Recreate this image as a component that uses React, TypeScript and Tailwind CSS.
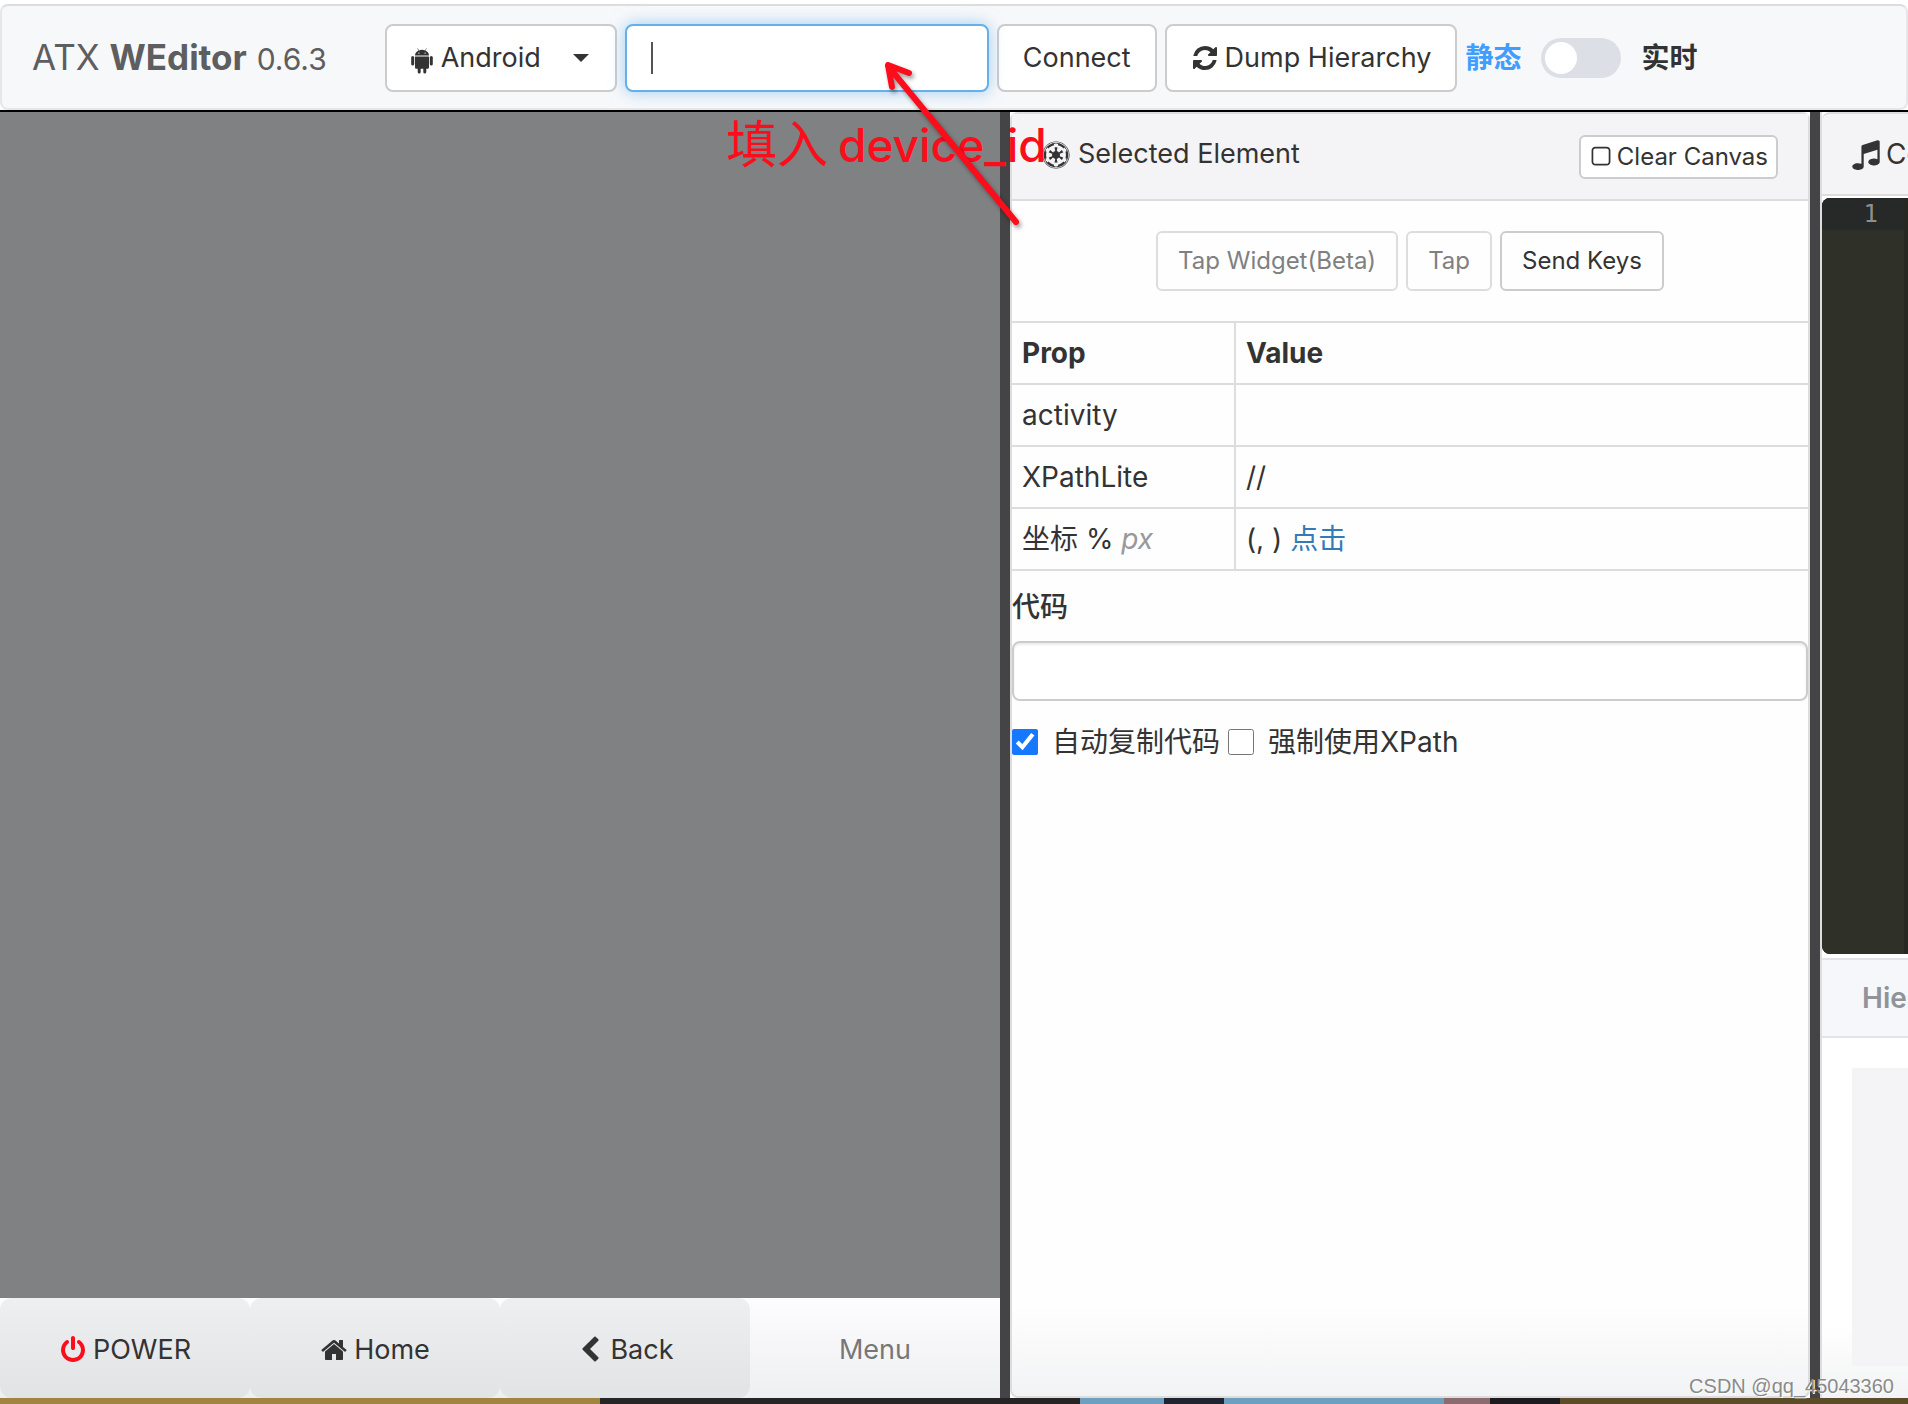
import React, { useState } from "react";
import { FaEmpire } from "react-icons/fa";

const paths = {
  refresh:
    "M1639 1056q0 5-1 7-64 268-268 434.5t-478 166.5q-146 0-282.5-55t-243.5-157l-129 129q-19 19-45 19t-45-19-19-45v-448q0-26 19-45t45-19h448q26 0 45 19t19 45-19 45l-137 137q71 66 161 102t187 36q134 0 250-65t186-179q11-17 53-117 8-23 30-23h192q13 0 22.5 9.5t9.5 22.5zm25-800v448q0 26-19 45t-45 19h-448q-26 0-45-19t-19-45 19-45l138-138q-148-137-349-137-134 0-250 65t-186 179q-11 17-53 117-8 23-30 23h-199q-13 0-22.5-9.5t-9.5-22.5v-7q65-268 270-434.5t480-166.5q146 0 284 55.5t245 156.5l130-129q19-19 45-19t45 19 19 45z",
  home: "M1472 992v480q0 26-19 45t-45 19h-384v-384h-256v384h-384q-26 0-45-19t-19-45v-480q0-1 .5-3t.5-3l575-474 575 474q1 2 1 6zm223-69l-62 74q-8 9-21 11h-3q-13 0-21-7l-692-577-692 577q-12 8-24 7-13-2-21-11l-62-74q-8-10-7-23.5t11-21.5l719-599q32-26 76-26t76 26l244 204v-195q0-14 9-23t23-9h192q14 0 23 9t9 23v408l219 182q10 8 11 21.5t-7 23.5z",
  power:
    "M1664 896q0 156-61 298t-164 245-245 164-298 61-298-61-245-164-164-245-61-298q0-182 80.5-343t226.5-270q43-32 95.5-25t83.5 50q32 42 24.5 94.5t-49.5 84.5q-98 74-151.5 181t-53.5 228q0 104 40.5 198.5t109.5 163.5 163.5 109.5 198.5 40.5 198.5-40.5 163.5-109.5 109.5-163.5 40.5-198.5q0-121-53.5-228t-151.5-181q-42-32-49.5-84.5t24.5-94.5q31-43 84-50t95 25q146 109 226.5 270t80.5 343zm-640-768v640q0 52-38 90t-90 38-90-38-38-90v-640q0-52 38-90t90-38 90 38 38 90z",
  chevron:
    "M1427 301l-531 531 531 531q19 19 19 45t-19 45l-166 166q-19 19-45 19t-45-19l-742-742q-19-19-19-45t19-45l742-742q19-19 45-19t45 19l166 166q19 19 19 45t-19 45z",
  music:
    "M1664 224v1120q0 50-34 89t-86 60.5-103.5 32-96.5 10.5-96.5-10.5-103.5-32-86-60.5-34-89 34-89 86-60.5 103.5-32 96.5-10.5q105 0 192 39v-537l-768 237v709q0 50-34 89t-86 60.5-103.5 32-96.5 10.5-96.5-10.5-103.5-32-86-60.5-34-89 34-89 86-60.5 103.5-32 96.5-10.5q105 0 192 39v-967q0-31 19-56.5t49-35.5l832-256q12-4 28-4 40 0 68 28t28 68z",
  square:
    "M1312 256h-832q-66 0-113 47t-47 113v832q0 66 47 113t113 47h832q66 0 113-47t47-113v-832q0-66-47-113t-113-47zm288 160v832q0 119-84.5 203.5t-203.5 84.5h-832q-119 0-203.5-84.5t-84.5-203.5v-832q0-119 84.5-203.5t203.5-84.5h832q119 0 203.5 84.5t84.5 203.5z",
};

function Icon({ name, className }: { name: keyof typeof paths; className: string }) {
  return (
    <svg viewBox="0 0 1792 1792" fill="currentColor" aria-hidden="true" className={`shrink-0 ${className}`}>
      <path d={paths[name]} />
    </svg>
  );
}

function AndroidIcon() {
  return (
    <svg viewBox="0 0 22 28" fill="currentColor" aria-hidden="true" className="mt-1.5 h-7 w-5.5 shrink-0">
      <path
        fillRule="evenodd"
        d="M4 8.6C4 6.4 5.4 4.6 7.500 3.600L6.400 1.600c-.2-.4.2-.6.4-.3L8 3.400c1.900-.8 4.200-.8 6.100 0l1.100-2.100c.2-.3.6-.1.4.3l-1.100 2C16.600 4.600 18 6.400 18 8.600zM7.900 5.400a.7.7 0 1 0 0 1.400.7.7 0 0 0 0-1.400zm6.200 0a.7.7 0 1 0 0 1.400.7.7 0 0 0 0-1.400z"
      />
      <path d="M4 9.400h14v10.800c0 .9-.7 1.600-1.600 1.600h-1.100v3.300a1.500 1.500 0 0 1-3 0v-3.300H9.700v3.300a1.500 1.500 0 0 1-3 0v-3.300H5.600c-.9 0-1.600-.7-1.600-1.600z" />
      <rect x="0.200" y="9.100" width="3" height="9.300" rx="1.500" />
      <rect x="18.800" y="9.100" width="3" height="9.300" rx="1.500" />
    </svg>
  );
}

function Navbar() {
  const [live, setLive] = useState(false);
  return (
    <header className="border-b-2 border-black bg-white pt-1">
      <nav className="flex items-center rounded-lg border-2 border-[#e7e7e9] border-t-[#dddddf] bg-[#f7f8fa] pt-4.5 pb-4 pl-7.5">
        <h1 className="mr-14.5 text-[35px] leading-10 whitespace-nowrap text-[#5e5e60]">
          ATX <b>WEditor</b> <small className="text-[30px]">0.6.3</small>
        </h1>
        <div className="flex items-center gap-2">
          <button className="flex h-17 items-center rounded-lg border-2 border-[#cccccd] bg-white pr-6.5 pl-6 text-[27px]">
            <AndroidIcon />
            <span className="ml-2">Android</span>
            <span className="ml-8 border-x-8 border-t-8 border-x-transparent border-t-[#333]" />
          </button>
          <div className="relative">
            <input
              aria-label="Device"
              className="block h-17 w-[364px] rounded-lg border-2 border-[#66afe9] bg-white px-6 text-[28px] shadow-[0_0_16px_rgba(102,175,233,0.6)] outline-none"
            />
            <span className="absolute top-4.5 left-6.5 h-8 w-0.5 bg-[#555]" />
          </div>
          <button className="h-17 rounded-lg border-2 border-[#cccccd] bg-white px-6 text-[27px]">Connect</button>
          <button className="flex h-17 items-center gap-1.5 rounded-lg border-2 border-[#cccccd] bg-white px-6 text-[27px] whitespace-nowrap">
            <Icon name="refresh" className="size-7" />
            Dump Hierarchy
          </button>
          <label className="flex items-center gap-5 text-[28px] font-bold whitespace-nowrap">
            <span className="text-[#409eff]">静态</span>
            <input
              type="checkbox"
              role="switch"
              checked={live}
              onChange={() => setLive(!live)}
              className="h-10 w-20 appearance-none rounded-full bg-[#dcdfe6] p-1 before:block before:size-8 before:rounded-full before:bg-white checked:bg-[#409eff] checked:before:ml-auto"
            />
            <span>实时</span>
          </label>
        </div>
      </nav>
    </header>
  );
}

function DevicePanel() {
  const key = "flex flex-1 items-center justify-center gap-1.5 rounded-xl bg-linear-to-b from-[#eeeff0] to-[#e2e3e4] pt-1";
  return (
    <section className="flex min-w-0 flex-[1000] flex-col">
      <div className="flex-1 bg-[#808182]" />
      <div className="flex h-25 bg-linear-to-b from-[#fdfdff] to-[#eeeff0] text-[27px]">
        <button className={key}>
          <Icon name="power" className="size-7 text-[#fc0d1b]" />
          POWER
        </button>
        <button className={key}>
          <Icon name="home" className="size-7" />
          Home
        </button>
        <button className={key}>
          <Icon name="chevron" className="size-7" />
          Back
        </button>
        <button className="flex-1 pt-1 text-[#777778]">Menu</button>
      </div>
    </section>
  );
}

function Splitter() {
  return <div className="w-2.5 shrink-0 bg-[#444446]" />;
}

function ElementPanel() {
  const cell = "border-2 border-[#ddddde] border-l-0 last:border-r-0 h-[62px] px-2.5 text-left";
  return (
    <section className="min-w-0 flex-[796] rounded-lg border-2 border-[#ddddde] bg-linear-to-b from-[#fefefe] from-93% to-[#f2f3f4]">
      <div className="flex h-[87px] items-center justify-between border-b-2 border-[#ddddde] bg-[#f4f4f6] px-7.5">
        <h2 className="mb-1 flex items-center gap-2 text-[27px]">
          <FaEmpire className="size-7" />
          Selected Element
        </h2>
        <button className="flex h-11 items-center gap-1 rounded-md border-2 border-[#cccccd] bg-white px-2 text-[24px]">
          <Icon name="square" className="size-6" />
          Clear Canvas
        </button>
      </div>
      <div className="flex h-30 items-center justify-center gap-2 text-[24px]">
        <button disabled className="h-15 rounded-md border-2 border-[#ddddde] px-5 text-[#808081]">
          Tap Widget(Beta)
        </button>
        <button disabled className="h-15 rounded-md border-2 border-[#ddddde] px-5 text-[#808081]">
          Tap
        </button>
        <button className="h-15 rounded-md border-2 border-[#cccccd] px-5">Send Keys</button>
      </div>
      <table className="w-full table-fixed border-collapse">
        <thead>
          <tr>
            <th className={`${cell} w-[28%]`}>Prop</th>
            <th className={cell}>Value</th>
          </tr>
        </thead>
        <tbody>
          <tr>
            <td className={cell}>activity</td>
            <td className={cell} />
          </tr>
          <tr>
            <td className={cell}>XPathLite</td>
            <td className={cell}>//</td>
          </tr>
          <tr>
            <td className={cell}>
              坐标 % <i className="text-[#999]">px</i>
            </td>
            <td className={cell}>
              (, ){" "}
              <a href="#tap" className="text-[#337ab7]">
                点击
              </a>
            </td>
          </tr>
        </tbody>
      </table>
      <label htmlFor="code" className="mt-4 block leading-10 font-medium">
        代码
      </label>
      <input
        id="code"
        className="mt-3.5 block h-15 w-full rounded-lg border-2 border-[#cccccd] bg-white px-4 shadow-[inset_0_2px_2px_rgba(0,0,0,0.075)] outline-none"
      />
      <div className="mt-5 flex items-center gap-2">
        <label className="flex items-center gap-3.5">
          <input type="checkbox" defaultChecked className="size-6.5 accent-[#1677ff]" />
          自动复制代码
        </label>
        <label className="flex items-center gap-3.5">
          <input type="checkbox" className="size-6.5" />
          强制使用XPath
        </label>
      </div>
    </section>
  );
}

function ConsolePanel() {
  return (
    <section className="flex min-w-0 flex-[86] flex-col overflow-hidden border-l-2 border-[#ddddde] bg-white whitespace-nowrap">
      <div className="flex h-[84px] shrink-0 items-center gap-1 rounded-tl-lg border-y-2 border-[#ddddde] bg-[#f4f4f6] pl-7">
        <Icon name="music" className="size-8" />
        Console
      </div>
      <div className="mt-0.5 flex h-[756px] shrink-0 rounded-l-lg bg-[#272822]">
        <div className="w-[82px] shrink-0 rounded-l-lg bg-[#2f3129]">
          <div className="h-8 rounded-tl-lg bg-[#272828] pr-6.5 text-right font-['DejaVu_Sans_Mono'] text-[24px] leading-8 text-[#8f908a]">
            1
          </div>
        </div>
      </div>
      <div className="mt-1 h-20 shrink-0 border-y-2 border-[#dfe4ed] bg-[#f5f7fa] pl-10 leading-19 font-semibold text-[#909399]">
        Hierarchy
      </div>
      <div className="flex-1 bg-linear-to-b from-white from-80% to-[#f2f3f4] pt-7.5 pb-8 pl-7.5">
        <div className="h-full bg-[#f4f4f6]" />
      </div>
    </section>
  );
}

export default function App() {
  return (
    <div className="relative flex h-screen flex-col overflow-hidden bg-white font-['Inter','Noto_Sans_CJK_SC',sans-serif] text-[28px] text-[#333334]">
      <Navbar />
      <main className="flex min-h-0 flex-1">
        <DevicePanel />
        <Splitter />
        <ElementPanel />
        <Splitter />
        <ConsolePanel />
      </main>
      <footer className="flex h-1.5 shrink-0">
        <div className="flex-[600] bg-[#a08440]" />
        <div className="flex-[480] bg-[#262425]" />
        <div className="flex-[84] bg-[#6f9fbe]" />
        <div className="flex-[60] bg-[#1f2430]" />
        <div className="flex-[220] bg-[#6f9fbe]" />
        <div className="flex-[46] bg-[#8c6b70]" />
        <div className="flex-[70] bg-[#1d1a20]" />
        <div className="flex-[348] bg-[#5c4d2a]" />
      </footer>
      <p className="absolute top-[115px] left-[726px] flex items-center gap-2.5 leading-[60px] whitespace-nowrap text-[#fc0d1b]">
        <span className="text-[51px]">填入</span>
        <span className="text-[46px] font-medium">device_id</span>
      </p>
      <svg
        viewBox="0 0 140 174"
        aria-hidden="true"
        className="absolute top-[58px] left-[882px] h-[174px] w-[140px] drop-shadow-[2px_3px_2px_rgba(0,0,0,0.4)]"
        fill="none"
        stroke="#fc0d1b"
        strokeWidth="6"
        strokeLinecap="round"
        strokeLinejoin="round"
      >
        <path d="M134 164L6 8M27 15L6 7L10 29" />
      </svg>
      <p className="absolute right-3.5 bottom-1.5 font-['Liberation_Sans',sans-serif] text-[20px] leading-6 text-[#8a8a8a] [text-shadow:1px_1px_0_#fff]">
        CSDN @qq_45043360
      </p>
    </div>
  );
}
